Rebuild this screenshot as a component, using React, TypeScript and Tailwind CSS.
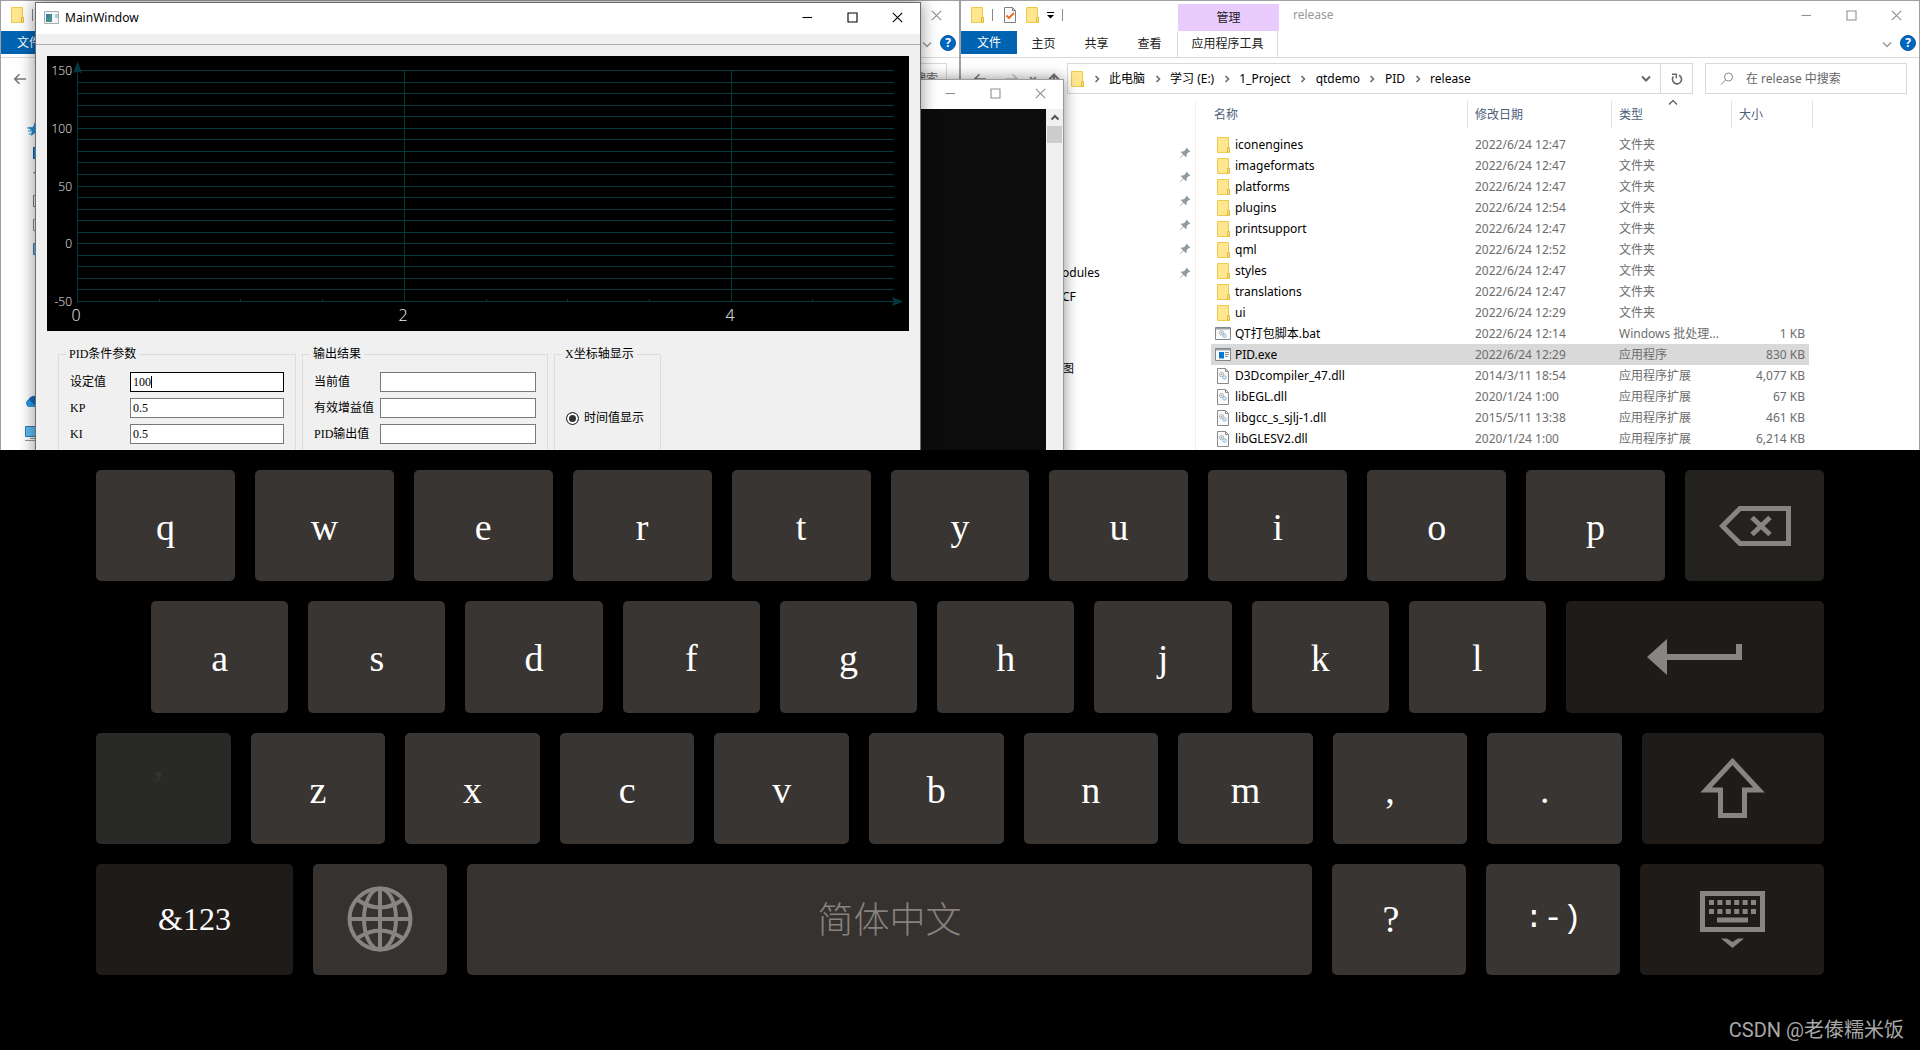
import { type ReactElement, type ReactNode } from 'react';

type FileKind = 'folder' | 'bat' | 'exe' | 'dll';

interface FileRow {
  name: string;
  date: string;
  type: string;
  size?: string;
  kind: FileKind;
  selected?: boolean;
}

const files: FileRow[] = [
  { name: 'iconengines', date: '2022/6/24 12:47', type: '文件夹', kind: 'folder' },
  { name: 'imageformats', date: '2022/6/24 12:47', type: '文件夹', kind: 'folder' },
  { name: 'platforms', date: '2022/6/24 12:47', type: '文件夹', kind: 'folder' },
  { name: 'plugins', date: '2022/6/24 12:54', type: '文件夹', kind: 'folder' },
  { name: 'printsupport', date: '2022/6/24 12:47', type: '文件夹', kind: 'folder' },
  { name: 'qml', date: '2022/6/24 12:52', type: '文件夹', kind: 'folder' },
  { name: 'styles', date: '2022/6/24 12:47', type: '文件夹', kind: 'folder' },
  { name: 'translations', date: '2022/6/24 12:47', type: '文件夹', kind: 'folder' },
  { name: 'ui', date: '2022/6/24 12:29', type: '文件夹', kind: 'folder' },
  { name: 'QT打包脚本.bat', date: '2022/6/24 12:14', type: 'Windows 批处理...', size: '1 KB', kind: 'bat' },
  { name: 'PID.exe', date: '2022/6/24 12:29', type: '应用程序', size: '830 KB', kind: 'exe', selected: true },
  { name: 'D3Dcompiler_47.dll', date: '2014/3/11 18:54', type: '应用程序扩展', size: '4,077 KB', kind: 'dll' },
  { name: 'libEGL.dll', date: '2020/1/24 1:00', type: '应用程序扩展', size: '67 KB', kind: 'dll' },
  { name: 'libgcc_s_sjlj-1.dll', date: '2015/5/11 13:38', type: '应用程序扩展', size: '461 KB', kind: 'dll' },
  { name: 'libGLESV2.dll', date: '2020/1/24 1:00', type: '应用程序扩展', size: '6,214 KB', kind: 'dll' },
];

const FolderIcon = () => (
  <svg className="w-[13px] h-4 shrink-0" viewBox="0 0 13 16">
    <path d="M.5.5h11v10h1v5H.5z" fill="#ffe68f" stroke="#edc94e" />
    <path d="M10.5 15V10.5h2V15z" fill="#ffe079" stroke="#e3bb41" />
  </svg>
);

const Gears = () => (
  <>
    <circle cx="5" cy="5" r="2.2" fill="#e8ebee" stroke="#8c959c" strokeDasharray="1.2 .6" />
    <circle cx="5" cy="5" r=".7" fill="#8c959c" />
    <circle cx="8" cy="8" r="1.8" fill="#cfe6f5" stroke="#7fa9c7" strokeDasharray="1.1 .6" />
  </>
);

const FileIcon = ({ kind }: { kind: FileKind }) => {
  if (kind === 'folder') return <FolderIcon />;
  if (kind === 'dll') {
    return (
      <svg className="w-3 h-4" viewBox="0 0 12 16">
        <path d="M.5.5h8l3 3v12H.5z" fill="#fbfbfb" stroke="#8a8a8a" />
        <path d="M8.500.5v3h3" fill="none" stroke="#8a8a8a" />
        <g transform="translate(-.5 1.500)"><Gears /></g>
      </svg>
    );
  }
  return (
    <svg className="w-4 h-[13px]" viewBox="0 0 16 13">
      <path d="M.5.5h15v12H.5z" fill="#fbfbfb" stroke="#80868c" />
      <path d="M1 1h14v1.500H1z" fill="#9aa0a6" />
      {kind === 'bat' ? (
        <g transform="translate(1.500 .8)"><Gears /></g>
      ) : (
        <>
          <path d="M4 4h5v6.500H4z" fill="#0078d7" />
          <path d="M10 4.500h4M10 6.500h4M10 8.500h3" stroke="#8a9096" />
        </>
      )}
    </svg>
  );
};

const PinIcon = () => (
  <svg className="w-3 h-3" viewBox="0 0 12 12">
    <path d="M7.500.8 11.200 4.500 10.300 5.200 9.700 5 7.800 7 7.600 9.500 6.800 10 4.500 7.700 1 11.200.8 11 4 7.200 2 5.200 2.600 4.400 5 4.300 7 2.300 6.800 1.500z" fill="#8d99a3" />
  </svg>
);

const Chevron = ({ className, d = 'M1 1.500 5 5.500 9 1.500', width = 1.5 }: { className: string; d?: string; width?: number }) => (
  <svg className={className} viewBox="0 0 10 7" fill="none" stroke="currentColor" strokeWidth={width}>
    <path d={d} />
  </svg>
);

const WindowButtons = () => (
  <div className="flex self-stretch ml-auto shrink-0">
    {[
      { label: '最小化', d: 'M.5 5.500h9.500' },
      { label: '最大化', d: 'M1 1h9v9H1z' },
      { label: '关闭', d: 'M.8.8l9.400 9.400M10.200.8.8 10.200' },
    ].map(item => (
      <button key={item.label} aria-label={item.label} className="w-[45px] flex items-center justify-center">
        <svg className="w-[11px] h-[11px]" viewBox="0 0 11 11" fill="none" stroke="currentColor" strokeWidth={1.1}>
          <path d={item.d} />
        </svg>
      </button>
    ))}
  </div>
);

interface ExplorerProps {
  className: string;
  title: string;
  path: string[];
  search: string;
  searchClass?: string;
  sidebar: ReactNode;
  rows: FileRow[];
}

const ExplorerWindow = ({ className, title, path, search, searchClass = '', sidebar, rows }: ExplorerProps) => (
  <section className={`absolute top-0 w-1/2 h-full flex flex-col overflow-hidden bg-white border-t border-x border-[#a0a0a0] text-xs text-[#222] ${className}`}>
    <header className="flex items-center h-[30px] pl-2.5 pb-0.5 shrink-0">
      <FolderIcon />
      <span className="ml-2 w-px h-3 bg-[#8a8a8a]" />
      <svg className="ml-[11px] w-3 h-4" viewBox="0 0 12 16">
        <path d="M.5.5h8l3 3v12H.5z" fill="#fafafa" stroke="#808080" />
        <path d="M8.500.5v3h3" fill="none" stroke="#808080" />
        <path d="M2.500 8.500 5 11l5-5" fill="none" stroke="#f26522" strokeWidth="1.800" />
      </svg>
      <span className="ml-2.5 flex"><FolderIcon /></span>
      <svg className="ml-2 w-[7px] h-[7px]" viewBox="0 0 7 7">
        <path d="M0 .5h7" stroke="#000" />
        <path d="M0 3h7L3.500 6.500z" />
      </svg>
      <span className="ml-2 w-px h-3 bg-[#8a8a8a]" />
      <span className="ml-[115px] -mb-0.5 w-[101px] h-[27px] self-end flex items-center justify-center bg-[#e9cbfd]">管理</span>
      <span className="ml-3.5 text-[#999]">{title}</span>
      <div className="ml-auto self-stretch flex text-[#8f8f8f]"><WindowButtons /></div>
    </header>

    <nav className="flex h-[27px] shrink-0 border-b border-[#dadada]">
      <button className="w-14 h-[23px] bg-[#0063b1] text-white">文件</button>
      <button className="w-[53px] h-[26px]">主页</button>
      <button className="w-[53px] h-[26px]">共享</button>
      <button className="w-[53px] h-[26px]">查看</button>
      <button className="ml-px w-[101px] h-[26px] border-x border-[#dadada]">应用程序工具</button>
      <button aria-label="展开功能区" className="ml-auto mr-2 text-[#999]"><Chevron className="w-2.5 h-[7px]" /></button>
      <button aria-label="帮助" className="mt-1 mr-[3px] size-4 rounded-full bg-[#0066bf] border border-[#0b5394] text-white text-xs leading-3 font-bold">?</button>
    </nav>

    <div className="flex items-center mt-[5px] h-[31px] shrink-0 text-[#777]">
      <svg className="ml-3 w-3.5 h-3.5" viewBox="0 0 14 14" fill="none" stroke="currentColor" strokeWidth="1.600"><path d="M13 7H2M6.500 2.200 1.700 7l4.800 4.800" /></svg>
      <svg className="ml-[18px] w-3.5 h-3.5 text-[#c8c8c8]" viewBox="0 0 14 14" fill="none" stroke="currentColor" strokeWidth="1.600"><path d="M1 7h11M7.500 2.200 12.300 7l-4.800 4.800" /></svg>
      <Chevron className="ml-[9px] w-2.5 h-[7px]" d="M2 2 5 5 8 2" />
      <svg className="ml-[9px] w-3.5 h-3.5" viewBox="0 0 14 14" fill="none" stroke="currentColor" strokeWidth="2"><path d="M7 13V2.500M2.200 7.500 7 2.500l4.800 5" /></svg>
      <div className="ml-1.5 flex-1 min-w-0 h-full flex items-center border border-[#d9d9d9] text-black">
        <span className="ml-[3px] flex"><FolderIcon /></span>
        {path.map(part => (
          <span key={part} className="flex items-center whitespace-nowrap">
            <span className="w-[25px] flex justify-center text-[#666]">
              <svg className="w-1.5 h-2" viewBox="0 0 6 8" fill="none" stroke="currentColor" strokeWidth="1.500"><path d="M1.500 1 4.500 4l-3 3" /></svg>
            </span>
            {part}
          </span>
        ))}
        <button aria-label="以前的位置" className="ml-auto w-7 flex justify-center text-[#666]"><Chevron className="w-2.5 h-[7px]" width={2} /></button>
        <button aria-label="刷新" className="w-8 h-full border-l border-[#d9d9d9] flex items-center justify-center text-[#666]">
          <svg className="w-3 h-3" viewBox="0 0 12 12" fill="none" stroke="currentColor" strokeWidth="1.600">
            <path d="M2.500 3.500A4.500 4.500 0 1 0 8 2.300" />
            <path d="M1 1.200h4.300v4" strokeWidth="1.500" />
          </svg>
        </button>
      </div>
      <label className="ml-3 mr-3 w-[202px] h-full flex items-center border border-[#d9d9d9] pl-3.5">
        <svg className="w-3.5 h-3.5 shrink-0" viewBox="0 0 14 14" fill="none" stroke="#888"><circle cx="8.500" cy="5" r="4" /><path d="M5.500 8 1 12.500" /></svg>
        <input aria-label="搜索" placeholder={search} className={`flex-1 min-w-0 bg-transparent outline-none placeholder:text-[#666] placeholder:opacity-100 ${searchClass}`} />
      </label>
    </div>

    <div className="flex flex-1 min-h-0 mt-[7px]">
      <aside className="w-[235px] shrink-0 border-r border-[#f0f0f0] text-black">{sidebar}</aside>
      {rows.length > 0 && (
        <table className="ml-[15px] w-[602px] table-fixed border-collapse self-start">
          <colgroup>
            <col className="w-[257px]" />
            <col className="w-[144px]" />
            <col className="w-[120px]" />
            <col className="w-[77px]" />
            <col className="w-1" />
          </colgroup>
          <thead>
            <tr className="text-left text-[#4c607a]">
              {['名称', '修改日期', '类型', '大小', ''].map((label, i) => (
                <th key={i} className="relative p-0 pb-[6px] font-normal">
                  <div className={`h-[27px] flex items-center ${i === 0 ? 'pl-[3px]' : i === 4 ? '' : 'pl-[7px]'} ${i === 3 ? '' : 'border-r border-[#e2e2e2]'}`}>{label}</div>
                  {i === 2 && <Chevron className="absolute left-14 -top-0.5 w-2.5 h-[7px] text-[#555]" d="M1 5.500 5 1.500 9 5.500" width={1.2} />}
                </th>
              ))}
            </tr>
          </thead>
          <tbody className="text-[#6d6d6d]">
            {rows.map(file => {
              const bg = file.selected ? 'bg-[#d9d9d9]' : '';
              return (
                <tr key={file.name} className="h-[21px] leading-5 whitespace-nowrap">
                  <td className={`p-0 pl-1 ${bg}`}>
                    <div className="flex items-center gap-1 text-black">
                      <span className="w-4 flex justify-center"><FileIcon kind={file.kind} /></span>
                      {file.name}
                    </div>
                  </td>
                  <td className={`p-0 pl-[7px] ${bg}`}>{file.date}</td>
                  <td className={`p-0 pl-[7px] ${bg}`}>{file.type}</td>
                  <td className={`p-0 pr-1 text-right ${bg}`}>{file.size}</td>
                  <td className="p-0" />
                </tr>
              );
            })}
          </tbody>
        </table>
      )}
    </div>
  </section>
);

const QuickAccess = () => (
  <div className="pt-4">
    <div className="h-6 pl-[26px] flex items-center">
      <svg className="w-4 h-4" viewBox="0 0 16 16"><path d="M8 1l2 5 5 .5-4 3.500 1.500 5L8 12l-4 3 1-5-4-3.500L6 6z" fill="#1e90dd" /><path d="M0 7h4M1 10h4M2 13h3" stroke="#1e90dd" /></svg>
    </div>
    {['#0067c0', '#3f7fb5', '#777', '#8a8a8a', '#2f7fbf'].map((color, i) => (
      <div key={i} className="h-6 pl-8 flex items-center">
        <svg className="w-4 h-3" viewBox="0 0 16 12">
          {i === 1 ? <path d="M0 1h16L8 9z" fill={color} /> : <path d="M.5.5h15v11H.5z" fill={i === 0 ? '#1e90dd' : i === 4 ? '#7cc0f0' : '#fff'} stroke={color} />}
        </svg>
      </div>
    ))}
    <div className="h-32" />
    <div className="h-6 pl-6 flex items-center">
      <svg className="w-[18px] h-3" viewBox="0 0 18 12"><path d="M4 12a4 4 0 0 1-.5-7.500A5.500 5.500 0 0 1 13 3a4.500 4.500 0 0 1 1 9z" fill="#0f6cbd" /><path d="M4 12a4 4 0 0 1 0-7l8 7z" fill="#2b9be8" /></svg>
    </div>
    <div className="mt-2 h-6 pl-6 flex items-center">
      <svg className="w-[18px] h-4" viewBox="0 0 18 16"><path d="M.5 1.500h17v10H.5z" fill="#5bbcf5" stroke="#3578a8" /><path d="M5 13.500h8M0 15.500h18" stroke="#8a9aa6" /></svg>
    </div>
  </div>
);

const sideItems = ['', '', '', '', '', 'odules', 'CF', '', '', '图'];

const PinnedList = () => (
  <ul className="pt-10">
    {sideItems.map((item, i) => (
      <li key={i} className="h-6 pl-[101px] pr-1 flex items-center justify-between">
        <span>{item}</span>
        {i < 6 && <PinIcon />}
      </li>
    ))}
  </ul>
);

const ConsoleWindow = () => (
  <section className="absolute left-[600px] top-[79px] w-[464px] h-[500px] flex flex-col bg-white border border-[#9a9a9a] shadow-[0_0_14px_rgba(0,0,0,0.45)]">
    <header className="flex h-[29px] pb-0.5 shrink-0 text-[#8f8f8f]"><WindowButtons /></header>
    <div className="flex flex-1">
      <div className="flex-1 bg-[#0c0c0c]" />
      <div className="w-[17px] bg-[#f0f0f0] px-px">
        <div className="h-[17px] flex items-center justify-center text-[#555]"><Chevron className="w-2.5 h-[7px]" d="M1.500 5.500 5 2l3.500 3.500" width={2} /></div>
        <div className="h-[17px] bg-[#cdcdcd]" />
      </div>
    </div>
  </section>
);

// Plot area in its own coordinates: x axis 0..5 over 817px, y axis -50..150 over 231px
const PLOT_LEFT = 30;
const PLOT_TOP = 14;
const PLOT_BOTTOM = 245;
const PLOT_RIGHT = 847;

const PidPlot = () => (
  <svg className="block w-full h-[275px] bg-black font-['Open_Sans',sans-serif]" viewBox="0 0 862 275" shapeRendering="crispEdges">
    <g fill="#033a42">
      {Array.from({ length: 21 }, (_, i) => (
        <rect key={i} x={PLOT_LEFT} y={PLOT_TOP + Math.round(i * 11.55)} width={PLOT_RIGHT - PLOT_LEFT} height="1" />
      ))}
      {[0, 327, 654].map(x => (
        <rect key={x} x={PLOT_LEFT + x} y={PLOT_TOP} width="1" height={PLOT_BOTTOM - PLOT_TOP} />
      ))}
      {[82, 163, 245, 409, 490, 572, 735].map(x => (
        <rect key={x} x={PLOT_LEFT + x} y={PLOT_BOTTOM - 2} width="1" height="2" />
      ))}
      <g shapeRendering="auto">
        <path d="M30.500 5.500 35 17 30.500 15.500 26 17z" />
        <path d="M856 245.500 845 250 847 245.500 845 241z" />
      </g>
    </g>
    <g className="font-light text-xs" fill="#f0f0f0" textAnchor="end">
      {[150, 100, 50, 0, -50].map((v, i) => (
        <text key={v} x="25" y={PLOT_TOP + 5 + Math.round(i * 57.75)}>{v}</text>
      ))}
    </g>
    <g className="font-light text-base" fill="#f0f0f0" textAnchor="middle">
      <text x="29" y="265">0</text>
      <text x="356" y="265">2</text>
      <text x="683" y="265">4</text>
    </g>
  </svg>
);

interface FieldProps {
  id: string;
  label: string;
  value?: string;
  labelClass: string;
  focused?: boolean;
}

const Field = ({ id, label, value = '', labelClass, focused }: FieldProps) => (
  <div className="relative flex items-center h-5">
    <label htmlFor={id} className={`shrink-0 whitespace-nowrap ${labelClass}`}>{label}</label>
    <input id={id} defaultValue={value} className={`flex-1 min-w-0 h-5 pl-0.5 bg-white border outline-none ${focused ? 'border-black' : 'border-[#7a7a7a]'}`} />
    {focused && <span className="absolute left-[81px] top-1 w-px h-3 bg-black" />}
  </div>
);

const MainWindow = () => (
  <section className="absolute left-[35px] top-0.5 w-[886px] h-[560px] bg-[#f0f0f0] border border-[#6b6b6b] shadow-[0_0_16px_rgba(0,0,0,0.45)]">
    <header className="flex items-center h-[31px] pl-2 pb-0.5 bg-white text-xs text-black">
      <svg className="w-[15px] h-[13px]" viewBox="0 0 15 13">
        <path d="M.5.5h14v12H.5z" fill="#f4f6f8" stroke="#a9adb3" />
        <path d="M2 3h6v8H2z" fill="#4a8f8a" />
        <path d="M2 3h3v4H2z" fill="#3f79ad" />
        <path d="M11 3h3v4h-3z" fill="#a8cfe0" />
      </svg>
      <span className="ml-1.5">MainWindow</span>
      <WindowButtons />
    </header>
    <div className="h-[11px] border-b border-[#b0b0b0]" />
    <div className="px-[11px] pt-[11px]">
      <PidPlot />
      <form className="mt-[15px] pl-[11px] flex gap-1.5 h-[200px] text-xs leading-4 text-black font-['Liberation_Serif','Noto_Sans_CJK_SC',serif]">
        <fieldset className="w-[238px] min-w-0 border border-[#dcdcdc] px-[11px]">
          <legend className="-ml-1 px-[3px]">PID条件参数</legend>
          <div className="flex flex-col gap-1.5 mt-2.5">
            <Field id="target" label="设定值" value="100" labelClass="w-[60px]" focused />
            <Field id="kp" label="KP" value="0.5" labelClass="w-[60px]" />
            <Field id="ki" label="KI" value="0.5" labelClass="w-[60px]" />
          </div>
        </fieldset>
        <fieldset className="w-[246px] min-w-0 border border-[#dcdcdc] px-[11px]">
          <legend className="-ml-1 px-[3px]">输出结果</legend>
          <div className="flex flex-col gap-1.5 mt-2.5">
            <Field id="current" label="当前值" labelClass="w-[66px]" />
            <Field id="gain" label="有效增益值" labelClass="w-[66px]" />
            <Field id="output" label="PID输出值" labelClass="w-[66px]" />
          </div>
        </fieldset>
        <fieldset className="w-[107px] min-w-0 border border-[#dcdcdc] px-[11px]">
          <legend className="-ml-1 px-[3px] whitespace-nowrap">X坐标轴显示</legend>
          <label className="flex items-center gap-[5px] mt-12 whitespace-nowrap">
            <input type="radio" name="axis" defaultChecked className="appearance-none size-[13px] shrink-0 rounded-full border border-[#333] bg-[#333] shadow-[inset_0_0_0_2px_#fff]" />
            时间值显示
          </label>
        </fieldset>
      </form>
    </div>
  </section>
);

const Key = ({ children, className = 'flex-1 bg-[#393532]', label }: { children: ReactNode; className?: string; label?: string }) => (
  <button aria-label={label} className={`min-w-0 rounded-[5px] flex items-center justify-center ${className}`}>
    {children}
  </button>
);

const BackspaceIcon = () => (
  <svg className="w-[72px] h-10" viewBox="0 0 72 40" fill="none" stroke="#878581" strokeWidth="5">
    <path d="M3.500 20 21 2.500h48.500v35H21z" />
    <path d="M33 11.500 51 28.500M51 11.500 33 28.500" />
  </svg>
);

const EnterIcon = () => (
  <svg className="w-[95px] h-9" viewBox="0 0 95 36" fill="#878581">
    <path d="M0 18 20 0v15h69V5h6v16H20v15z" />
  </svg>
);

const ShiftIcon = () => (
  <svg className="w-[65px] h-[60px]" viewBox="0 0 65 60" fill="none" stroke="#878581" strokeWidth="5">
    <path d="M32.500 3.500 59 32H44.500v25.500h-24V32H6z" />
  </svg>
);

const GlobeIcon = () => (
  <svg className="w-[66px] h-[66px]" viewBox="0 0 66 66" fill="none" stroke="#878581" strokeWidth="4">
    <circle cx="33" cy="33" r="30.500" />
    <ellipse cx="33" cy="33" rx="16" ry="30.500" />
    <path d="M33 2v62M2 33h62M10 13.500q23 16 46 0M10 52.500q23-16 46 0" />
  </svg>
);

const HideKeyboardIcon = () => (
  <svg className="w-[65px] h-[57px]" viewBox="0 0 65 57" fill="#878581">
    <path d="M2.500 2.500h60v36h-60z" fill="none" stroke="#878581" strokeWidth="5" />
    {[0, 1, 2, 3, 4, 5].map(i => (
      <g key={i}>
        <rect x={9 + i * 8.4} y="9" width="5" height="5" />
        <rect x={9 + i * 8.4} y="18" width="5" height="5" />
      </g>
    ))}
    <path d="M17 26.500h31v5H17zM21 47.500h6l5.500 3.500 5.500-3.500h6L32.500 57z" />
  </svg>
);

const Keyboard = () => {
  const letters = (row: string): ReactElement[] =>
    row.split('').map(char => <Key key={char}><span className="pt-1">{char}</span></Key>);

  return (
    <section className="grid grid-rows-4 gap-5 h-[505px] mt-5 px-24 text-[38px] text-white font-['Liberation_Serif','Noto_Sans_CJK_SC',serif]">
      <div className="flex gap-5">
        {letters('qwertyuiop')}
        <Key label="Backspace" className="flex-1 bg-[#23221e]"><BackspaceIcon /></Key>
      </div>
      <div className="flex gap-5 pl-[55px]">
        {letters('asdfghjkl')}
        <Key label="Enter" className="w-[258px] bg-[#1f1b19]"><EnterIcon /></Key>
      </div>
      <div className="flex gap-5">
        <Key className="flex-1 bg-[#292928] text-[#363432]"><span className="pr-2.5 pb-2">’</span></Key>
        {letters('zxcvbnm')}
        <Key><span className="pt-1 pr-5">,</span></Key>
        <Key><span className="pt-1 pr-5">.</span></Key>
        <Key label="Shift" className="w-[182px] bg-[#1f1b19]"><ShiftIcon /></Key>
      </div>
      <div className="grid grid-cols-[197fr_134fr_845fr_134fr_134fr_184fr] gap-5">
        <Key className="bg-[#1f1b19] text-[32px]">&amp;123</Key>
        <Key label="Language" className="bg-[#363230]"><GlobeIcon /></Key>
        <Key className="bg-[#363230] text-4xl font-light text-[#85827f]"><span className="pt-1">简体中文</span></Key>
        <Key className="bg-[#393532]"><span className="pr-4">?</span></Key>
        <Key className="bg-[#393532] text-[32px] font-['Liberation_Mono',monospace]">:-)</Key>
        <Key label="Hide keyboard" className="bg-[#1f1b19]"><HideKeyboardIcon /></Key>
      </div>
    </section>
  );
};

export default function App() {
  return (
    <main className="min-h-screen flex flex-col bg-black font-['Noto_Sans','Noto_Sans_CJK_SC',sans-serif]">
      <div className="relative h-[450px] shrink-0 overflow-hidden">
        <ExplorerWindow
          className="left-0"
          title=""
          path={['此电脑']}
          search="在 qtdemo 中搜索"
          searchClass="text-right pr-2"
          sidebar={<QuickAccess />}
          rows={[]}
        />
        <ExplorerWindow
          className="left-1/2"
          title="release"
          path={['此电脑', '学习 (E:)', '1_Project', 'qtdemo', 'PID', 'release']}
          search="在 release 中搜索"
          searchClass="pl-3"
          sidebar={<PinnedList />}
          rows={files}
        />
        <ConsoleWindow />
        <MainWindow />
      </div>
      <Keyboard />
      <footer className="flex-1 flex items-end justify-end pr-4 pb-2 text-xl leading-6 text-[#a8a8a8] font-['Roboto','Noto_Sans_CJK_SC',sans-serif]">
        CSDN @老傣糯米饭
      </footer>
    </main>
  );
}
